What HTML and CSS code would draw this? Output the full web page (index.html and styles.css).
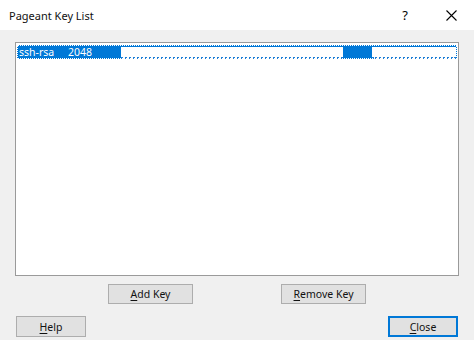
FILE: index.html
```html
<!DOCTYPE html>
<html lang="en">
<head>
    <meta charset="UTF-8">
    <title>Pageant Key List</title>
    <link rel="stylesheet" href="styles.css">
</head>
<body>
    <!-- Title bar -->
    <div class="titlebar">
        <span class="title">Pageant Key List</span>
        <span class="help-btn">?</span>
        <span class="close-btn">
            <svg width="11" height="11" viewBox="0 0 11 11">
                <path d="M0.5 0.5 L10.5 10.5 M10.5 0.5 L0.5 10.5" stroke="#000" stroke-width="1.1" fill="none"/>
            </svg>
        </span>
    </div>

    <!-- Dialog body -->
    <div class="dialog">
        <div class="keylist">
            <div class="key-row selected">
                <span class="col-type">ssh-rsa</span>
                <span class="col-bits">2048</span>
                <span class="redact r1"></span>
                <span class="redact r2"></span>
            </div>
        </div>

        <div class="actions">
            <button class="btn wide"><u>A</u>dd Key</button>
            <button class="btn wide"><u>R</u>emove Key</button>
        </div>

        <div class="footer">
            <button class="btn"><u>H</u>elp</button>
            <button class="btn default"><u>C</u>lose</button>
        </div>
    </div>
</body>
</html>
```

FILE: styles.css
```css
/* Reset */
body {
    margin: 0;
    padding: 0;
    width: 474px;
    height: 340px;
    overflow: hidden;
    font-family: 'Noto Sans', 'Liberation Sans', sans-serif;
    font-size: 12px;
    color: #000;
    background: #f0f0f0;
}

/* Title bar */
.titlebar {
    height: 30px;
    background: #fff;
    display: flex;
    align-items: center;
    padding-left: 9px;
}

.title {
    flex: 1;
    font-size: 11px;
    color: #111;
}

.help-btn {
    width: 46px;
    text-align: center;
    font-size: 13px;
    padding-left: 3px;
}

.close-btn {
    width: 46px;
    display: flex;
    justify-content: center;
}

/* Dialog body */
.dialog {
    padding: 12px 15px 0 15px;
}

.keylist {
    height: 228px;
    background: #fff;
    border: 1px solid #9a9a9a;
    padding: 2px 1px;
}

.key-row {
    height: 14px;
    display: flex;
    align-items: center;
    font-size: 10.5px;
}

.key-row.selected {
    background: #0078d7;
    color: #fff;
    outline: 1px dotted #fff;
    outline-offset: -1px;
}

.col-type {
    width: 49px;
    padding-left: 2px;
}

.col-bits {
    width: 53px;
}

/* blanked out fingerprint and comment */
.redact {
    height: 12px;
    margin-top: 1px;
    background: #fff;
    border-bottom: 2px dotted #1f7fd6;
    box-sizing: border-box;
}

.redact.r1 {
    width: 222px;
}

.redact.r2 {
    width: 84px;
    margin-left: 29px;
}

/* Buttons */
.btn {
    font-family: inherit;
    font-size: 10.5px;
    height: 20px;
    width: 85px;
    padding: 0;
    background: #e1e1e1;
    border: 1px solid #adadad;
    color: #111;
}

.btn u {
    text-decoration-thickness: 1px;
    text-underline-offset: 2px;
}

.actions {
    display: flex;
    justify-content: center;
    gap: 88px;
    margin-top: 8px;
}

.footer {
    display: flex;
    justify-content: space-between;
    margin-top: 12px;
    padding: 0 1px;
}

.footer .btn {
    width: 70px;
    height: 21px;
}

.btn.default {
    border-color: #0078d7;
    box-shadow: inset 0 0 0 1px #0078d7;
}
```
